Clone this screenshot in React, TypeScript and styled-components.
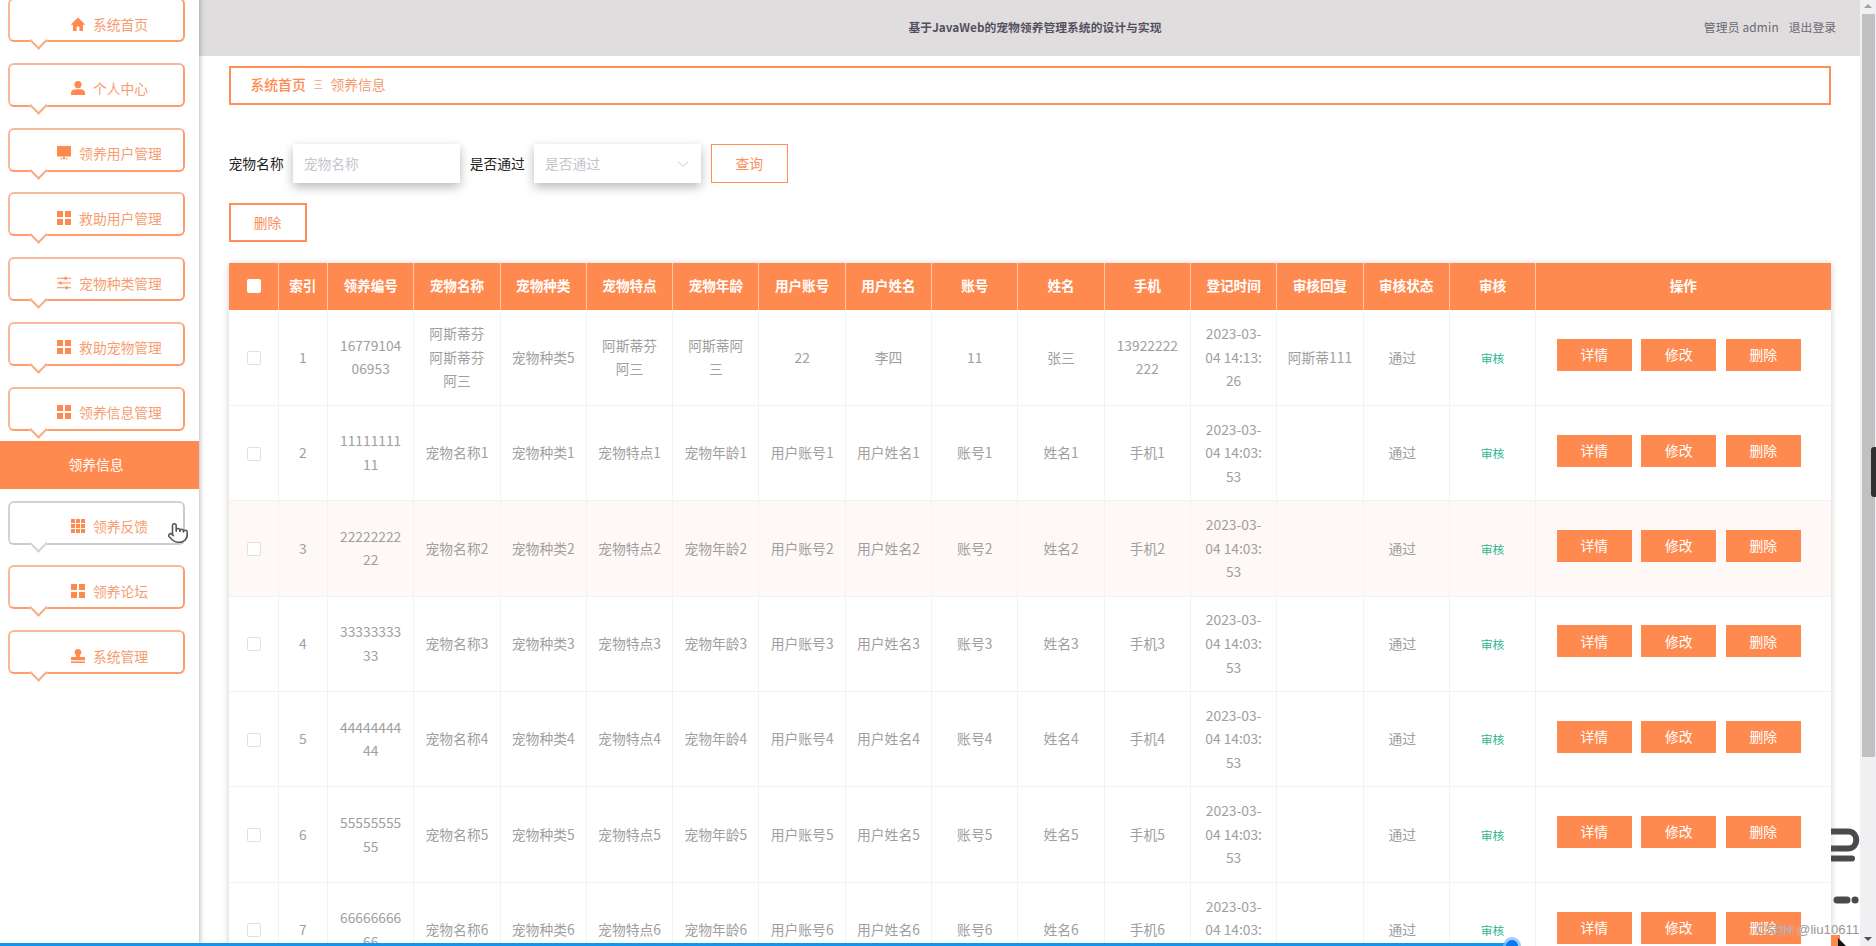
import React from 'react'
import styled, { createGlobalStyle } from 'styled-components'
import { Pointer } from 'lucide-react'

const ORANGE = '#ff8a50'

const GlobalStyle = createGlobalStyle`
  html, body {
    margin: 0;
    padding: 0;
    height: 100%;
    overflow: hidden;
    background: #fff;
    font-family: "Noto Sans CJK SC", "Noto Sans", sans-serif;
  }
  * { box-sizing: border-box; }
`

const Page = styled.div`
  position: relative;
  display: flex;
  width: 1876px;
  height: 946px;
  overflow: hidden;
`

const Aside = styled.aside`
  position: relative;
  z-index: 2;
  flex: 0 0 199px;
  margin-top: -2px;
  background: #fff;
  box-shadow: 1px 0 5px rgba(0, 0, 0, 0.28);
`

const Bubble = styled.div<{ $hover?: boolean }>`
  position: relative;
  display: flex;
  align-items: center;
  justify-content: center;
  gap: 8px;
  height: 44px;
  margin: 0 14px 20.8px 8px;
  padding: 7px 0 0 26px;
  background: #fff;
  border: 2px solid ${p => (p.$hover ? '#d3d2d6' : '#f7b899')};
  border-right-color: ${p => (p.$hover ? '#cbcace' : '#ff9c6b')};
  border-bottom-color: ${p => (p.$hover ? '#cbcace' : '#ff9c6b')};
  border-radius: 6px;
  color: #f69d72;
  font-size: 13.8px;
  line-height: 20px;

  &::after {
    content: '';
    position: absolute;
    left: 22px;
    bottom: -7px;
    width: 11px;
    height: 11px;
    background: #fff;
    border-right: 2px solid ${p => (p.$hover ? '#d3d2d6' : '#f7ac86')};
    border-bottom: 2px solid ${p => (p.$hover ? '#d3d2d6' : '#f7ac86')};
    transform: rotate(45deg);
  }
`

const SubItem = styled.div`
  display: flex;
  align-items: center;
  justify-content: center;
  height: 48px;
  margin: -11px 0 12px;
  padding: 0 7px 2px 0;
  background: ${ORANGE};
  color: #fff;
  font-size: 13.8px;
`

const MenuSvg = styled.svg`
  width: 14px;
  height: 14px;
  flex: none;
  fill: ${ORANGE};
`

const Icons: Record<string, React.ReactNode> = {
  home: <path d="M7 .6 0 7.2l1 1 1-.9V14h3.6V9.6h2.8V14H12V7.3l1 .9 1-1z" />,
  user: <path d="M7 0a3.6 3.6 0 1 1 0 7.2A3.6 3.6 0 0 1 7 0zM0 12.2C0 9.8 2 8.2 4 8.2h6c2 0 4 1.6 4 4V14H0z" />,
  screen: <path d="M0 0h14v10.5H0zM3 12.4h8v.9H3zM6.3 10.5h1.4v2H6.3z" />,
  menu: <path d="M0 0h6v6H0zM8 0h6v6H8zM0 8h6v6H0zM8 8h6v6H8z" />,
  sliders: <path d="M0 1.8h7.6v-1h2v1H14v1H9.6v1h-2v-1H0zM0 6.5h2.6v-1h2v1H14v1H4.6v1h-2v-1H0zM0 11.2h8.6v-1h2v1H14v1h-3.4v1h-2v-1H0z" />,
  grid: <path d="M0 0h4v4H0zM5 0h4v4H5zM10 0h4v4h-4zM0 5h4v4H0zM5 5h4v4H5zM10 5h4v4h-4zM0 10h4v4H0zM5 10h4v4H5zM10 10h4v4h-4z" />,
  stamp: <path d="M7 0c2 0 3.4 1.5 3.4 3.3 0 1.100-.5 1.800-1.100 2.400-.5.6-.6 1.200-.4 2.300H13c.6 0 1 .4 1 1V11.200H0V9c0-.6.4-1 1-1h4.100c.2-1.100.1-1.700-.4-2.300-.6-.6-1.100-1.300-1.100-2.400C3.600 1.500 5 0 7 0zM0 12.500h14V14H0z" />,
}

const MenuIcon = ({ name }: { name: string }) => <MenuSvg viewBox="0 0 14 14">{Icons[name]}</MenuSvg>

const Main = styled.main`
  flex: 1;
  min-width: 0;
  height: 946px;
  overflow: hidden;
  background: #fff;
`

const Header = styled.header`
  display: grid;
  grid-template-columns: 1fr auto 1fr;
  align-items: center;
  height: 56px;
  padding-bottom: 3px;
  background: #e0dddf;
`

const Title = styled.div`
  grid-column: 2;
  padding-left: 11px;
  color: #55505f;
  font-size: 11.8px;
  font-weight: 700;
`

const UserBox = styled.div`
  display: flex;
  justify-content: flex-end;
  gap: 10px;
  padding-right: 24px;
  color: #6b6870;
  font-size: 11.8px;
`

const Admin = styled.span`
  letter-spacing: 0.2px;
`

const Content = styled.div`
  padding: 10px 29.5px 0;
`

const Crumbs = styled.nav`
  display: flex;
  align-items: center;
  gap: 8px;
  height: 39px;
  padding: 0 0 3px 20px;
  border: 2px solid #ff8d55;
  color: ${ORANGE};
  font-size: 13.8px;
`

const CrumbHome = styled.span`
  font-weight: 500;
`

const CrumbSep = styled.span`
  color: #f4b295;
  font-family: "Liberation Sans", sans-serif;
  font-size: 13.5px;
`

const CrumbLast = styled.span`
  color: #f59a6e;
`

const Filters = styled.div`
  display: flex;
  align-items: center;
  height: 39px;
  margin-top: 39px;
  color: #222;
  font-size: 13.8px;
`

const Label = styled.label`
  margin-right: 9px;
  padding-bottom: 2px;
`

const Field = styled.div`
  position: relative;
  width: 167px;
  height: 39px;
  margin-right: 10px;
  box-shadow: 0 4px 10px rgba(0, 0, 0, 0.28);
  background: #fff;
`

const TextInput = styled.input`
  width: 100%;
  height: 100%;
  padding: 0 11px 2px;
  border: 0;
  outline: 0;
  background: transparent;
  font: inherit;

  &::placeholder {
    color: #c4c6cd;
  }
`

const Chevron = styled.svg`
  position: absolute;
  right: 12px;
  top: 15px;
  width: 12px;
  height: 10px;
  fill: none;
  stroke: #c0c4cc;
  stroke-width: 1;
`

const OutlineButton = styled.button<{ $thick?: boolean }>`
  width: ${p => (p.$thick ? '78px' : '77px')};
  height: 39px;
  padding: 0 0 2px;
  background: #fff;
  border: ${p => (p.$thick ? '2px' : '1px')} solid #ff8d58;
  color: #f98f5d;
  font: inherit;
  font-size: 13.8px;
`

const DeleteRow = styled.div`
  margin-top: 20px;
  margin-bottom: 21px;
`

const Table = styled.table`
  width: 1602px;
  border-collapse: collapse;
  table-layout: fixed;
  box-shadow: 0 1px 7px rgba(0, 0, 0, 0.2);
`

const Th = styled.th`
  height: 47px;
  padding: 0 4px 3px;
  background: ${ORANGE};
  border-left: 1px solid #ffc8a8;
  color: #fff;
  font-size: 13.6px;
  font-weight: 700;

  &:first-child {
    border-left: 0;
  }
`

const Tr = styled.tr<{ $tint?: boolean }>`
  height: 95.4px;
  background: ${p => (p.$tint ? '#fef9f7' : '#fff')};
  border-bottom: 1px solid #f3f1f1;
`

const Td = styled.td`
  padding: 0 10px;
  border-left: 1px solid #f4f2f2;
  color: #a09e9e;
  font-size: 13.8px;
  line-height: 23.6px;
  text-align: center;
  overflow-wrap: anywhere;

  &:first-child {
    border-left: 0;
  }
`

const Box = styled.span<{ $white?: boolean }>`
  display: inline-block;
  width: 14px;
  height: 14px;
  margin: 0 0 2px 1px;
  vertical-align: middle;
  background: #fff;
  border: ${p => (p.$white ? '0' : '1px solid #e2e0e0')};
  border-radius: 2px;
`

const Lines = styled.span`
  white-space: pre-line;
`

const Status = styled.span`
  margin-right: 8px;
`

const AuditLink = styled.span`
  color: #2fb78f;
  font-size: 11.8px;
`

const Actions = styled.div`
  display: flex;
  justify-content: center;
  gap: 9.5px;
  margin-bottom: 5px;
  padding-right: 9px;
`

const ActionButton = styled.button`
  width: 75px;
  height: 32px;
  padding: 0;
  border: 0;
  background: ${ORANGE};
  color: #fff;
  font: inherit;
  font-size: 13.8px;
`

const ScrollTrack = styled.div`
  position: relative;
  flex: 0 0 16px;
  background: #f0f0f2;
`

const ScrollThumb = styled.div`
  position: absolute;
  left: 2px;
  right: 1px;
  top: 14px;
  height: 743px;
  background: #c1c1c1;
`

const ScrollArrow = styled.div<{ $down?: boolean }>`
  position: absolute;
  left: 4px;
  ${p => (p.$down ? 'bottom: 5px;' : 'top: 4px;')}
  border-left: 4px solid transparent;
  border-right: 4px solid transparent;
  ${p => (p.$down ? 'border-top: 4px solid #505050;' : 'border-bottom: 4px solid #a3a3a3;')}
`

const ThumbMark = styled.div`
  position: absolute;
  right: 0;
  top: 447px;
  width: 5px;
  height: 50px;
  background: #303030;
  border-radius: 3px 0 0 3px;
`

const Progress = styled.div`
  position: absolute;
  left: 0;
  bottom: 0;
  width: 1512px;
  height: 3px;
  background: #0f96f0;
  z-index: 3;
`

const Knob = styled.div`
  position: absolute;
  right: -6px;
  top: -3px;
  width: 12px;
  height: 12px;
  border-radius: 50%;
  background: #0a78ee;
  box-shadow: 0 0 0 3px rgba(120, 190, 255, 0.75);
`

const Watermark = styled.div`
  position: absolute;
  left: 1756px;
  top: 922px;
  z-index: 4;
  color: #989898;
  font-family: "Liberation Sans", sans-serif;
  font-size: 13.2px;
  white-space: nowrap;
  text-shadow: 0 0 1px #fff;
`

const Overlay = styled.svg`
  position: absolute;
  left: 1831px;
  top: 825px;
  z-index: 3;
`

const HandCursor = styled.div`
  position: absolute;
  left: 167px;
  top: 522px;
  z-index: 5;
  color: #55555a;
  line-height: 0;
`

const menuTop = [
  { icon: 'home', label: '系统首页' },
  { icon: 'user', label: '个人中心' },
  { icon: 'screen', label: '领养用户管理' },
  { icon: 'menu', label: '救助用户管理' },
  { icon: 'sliders', label: '宠物种类管理' },
  { icon: 'menu', label: '救助宠物管理' },
  { icon: 'menu', label: '领养信息管理' },
]

const menuBottom = [
  { icon: 'grid', label: '领养反馈', hover: true },
  { icon: 'menu', label: '领养论坛' },
  { icon: 'stamp', label: '系统管理' },
]

const columns = [
  { title: '', width: 49.5 },
  { title: '索引', width: 49.5 },
  { title: '领养编号', width: 86.3 },
  { title: '宠物名称', width: 86.3 },
  { title: '宠物种类', width: 86.3 },
  { title: '宠物特点', width: 86.3 },
  { title: '宠物年龄', width: 86.3 },
  { title: '用户账号', width: 86.3 },
  { title: '用户姓名', width: 86.3 },
  { title: '账号', width: 86.3 },
  { title: '姓名', width: 86.3 },
  { title: '手机', width: 86.3 },
  { title: '登记时间', width: 86.3 },
  { title: '审核回复', width: 86.3 },
  { title: '审核状态', width: 86.3 },
  { title: '审核', width: 86.3 },
  { title: '操作', width: 294.8 },
]

const firstRow = {
  code: '1677910406953',
  cells: ['阿斯蒂芬阿斯蒂芬阿三', '宠物种类5', '阿斯蒂芬阿三', '阿斯蒂阿三', '22', '李四', '11', '张三', '13922222222'],
  date: '2023-03-\n04 14:13:\n26',
  reply: '阿斯蒂111',
}

const rows = [
  firstRow,
  ...[1, 2, 3, 4, 5, 6].map(n => ({
    code: String(n).repeat(10),
    cells: ['宠物名称', '宠物种类', '宠物特点', '宠物年龄', '用户账号', '用户姓名', '账号', '姓名', '手机'].map(t => t + n),
    date: '2023-03-\n04 14:03:\n53',
    reply: '',
  })),
]

export default function App() {
  return (
    <>
      <GlobalStyle />
      <Page>
        <Aside>
          {menuTop.map(m => (
            <Bubble key={m.label}>
              <MenuIcon name={m.icon} />
              {m.label}
            </Bubble>
          ))}
          <SubItem>领养信息</SubItem>
          {menuBottom.map(m => (
            <Bubble key={m.label} $hover={m.hover}>
              <MenuIcon name={m.icon} />
              {m.label}
            </Bubble>
          ))}
        </Aside>

        <Main>
          <Header>
            <Title>基于JavaWeb的宠物领养管理系统的设计与实现</Title>
            <UserBox>
              <Admin>管理员 admin</Admin>
              <span>退出登录</span>
            </UserBox>
          </Header>
          <Content>
            <Crumbs>
              <CrumbHome>系统首页</CrumbHome>
              <CrumbSep>Ξ</CrumbSep>
              <CrumbLast>领养信息</CrumbLast>
            </Crumbs>

            <Filters>
              <Label>宠物名称</Label>
              <Field>
                <TextInput placeholder="宠物名称" />
              </Field>
              <Label>是否通过</Label>
              <Field>
                <TextInput placeholder="是否通过" readOnly />
                <Chevron viewBox="0 0 12 10">
                  <path d="M1 2.5 6 7.5 11 2.5" />
                </Chevron>
              </Field>
              <OutlineButton>查询</OutlineButton>
            </Filters>

            <DeleteRow>
              <OutlineButton $thick>删除</OutlineButton>
            </DeleteRow>

            <Table>
              <colgroup>
                {columns.map((c, i) => (
                  <col key={i} style={{ width: c.width }} />
                ))}
              </colgroup>
              <thead>
                <tr>
                  <Th>
                    <Box $white />
                  </Th>
                  {columns.slice(1).map(c => (
                    <Th key={c.title}>{c.title}</Th>
                  ))}
                </tr>
              </thead>
              <tbody>
                {rows.map((r, i) => (
                  <Tr key={i} $tint={i === 2}>
                    <Td>
                      <Box />
                    </Td>
                    <Td>{i + 1}</Td>
                    <Td>{r.code}</Td>
                    {r.cells.map((c, j) => (
                      <Td key={j}>{c}</Td>
                    ))}
                    <Td>
                      <Lines>{r.date}</Lines>
                    </Td>
                    <Td>{r.reply}</Td>
                    <Td>
                      <Status>通过</Status>
                    </Td>
                    <Td>
                      <AuditLink>审核</AuditLink>
                    </Td>
                    <Td>
                      <Actions>
                        <ActionButton>详情</ActionButton>
                        <ActionButton>修改</ActionButton>
                        <ActionButton>删除</ActionButton>
                      </Actions>
                    </Td>
                  </Tr>
                ))}
              </tbody>
            </Table>
          </Content>
        </Main>

        <ScrollTrack>
          <ScrollArrow />
          <ScrollThumb />
          <ThumbMark />
          <ScrollArrow $down />
        </ScrollTrack>

        <Overlay width="30" height="121" viewBox="0 0 30 121">
          <g fill="none" stroke="#4a4a4c" strokeWidth="6" strokeLinecap="round">
            <path d="M0 6.500h17c11 0 11 17 0 17H0" />
            <path d="M1 33.500h20" />
            <path d="M6 75h10" strokeWidth="7" />
            <path d="M24 75h.1" strokeWidth="7" />
          </g>
          <path d="M0 110h9v11H0z" fill="#ff8a50" />
          <path d="M7 113l8 8H7z" fill="#111" />
        </Overlay>

        <HandCursor>
          <Pointer size={22} fill="#fff" strokeWidth={1.7} />
        </HandCursor>

        <Watermark>CSDN @liu10611</Watermark>

        <Progress>
          <Knob />
        </Progress>
      </Page>
    </>
  )
}
